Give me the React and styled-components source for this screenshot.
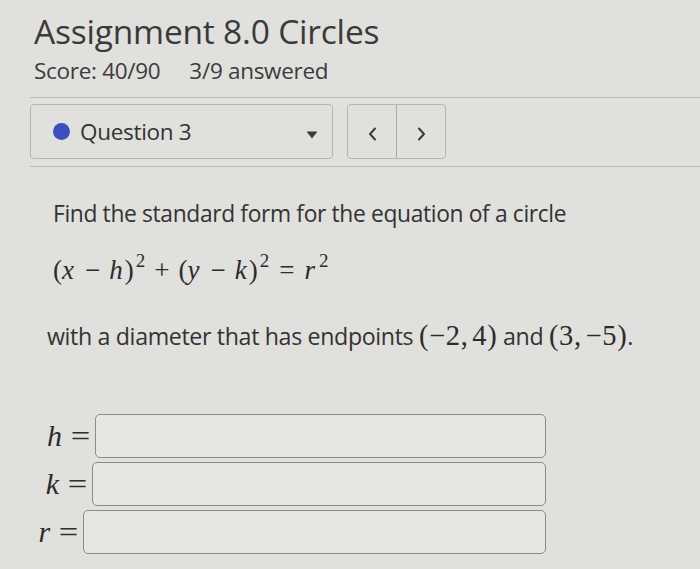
import React from "react";
import styled, { createGlobalStyle } from "styled-components";

const Global = createGlobalStyle`
  html, body { margin: 0; padding: 0; background: #e0e0dd; }
  body { font-family: "Open Sans", "Liberation Sans", sans-serif; color: #333; }
`;

const Page = styled.div`
  width: 700px;
  height: 569px;
  overflow: hidden;
  background: #e0e0dd;
`;

const Header = styled.header`
  padding: 10px 0 0 34px;
`;

const Title = styled.h1`
  margin: 0;
  font-size: 33.5px;
  font-weight: 400;
  line-height: 42px;
  color: #3a3a3a;
  letter-spacing: -0.2px;
`;

const ScoreRow = styled.div`
  display: flex;
  gap: 29px;
  font-size: 22.5px;
  line-height: 30px;
  color: #3c3c3c;
  margin-top: 4px;
  letter-spacing: -0.3px;
`;

const Bar = styled.div`
  margin: 11px 0 0 30px;
  border-top: 1.5px solid #b8b8b4;
  border-bottom: 1.5px solid #b8b8b4;
  padding: 6px 0 7px 0;
  display: flex;
  align-items: center;
  gap: 14px;
`;

const Select = styled.div`
  width: 303px;
  height: 55px;
  box-sizing: border-box;
  border: 1.5px solid #b4b4b0;
  border-radius: 4px;
  display: flex;
  align-items: center;
  padding: 0 12px 0 22px;
  font-size: 22.5px;
  color: #333;
  letter-spacing: -0.3px;
`;

const Dot = styled.span`
  width: 17px;
  height: 17px;
  border-radius: 50%;
  background: #3b4fc1;
  margin-right: 10px;
  flex: none;
`;

const Label = styled.span`
  flex: 1;
`;

const Caret = styled.svg`
  width: 12px;
  height: 8px;
  margin-top: 6px;
  margin-right: 2px;
  fill: #3c3c3c;
`;

const NavGroup = styled.div`
  display: flex;
  height: 55px;
  box-sizing: border-box;
  border: 1.5px solid #b4b4b0;
  border-radius: 4px;
`;

const NavButton = styled.div`
  width: 48px;
  display: flex;
  align-items: center;
  justify-content: center;
  & + & { border-left: 1.5px solid #a8a8a4; }
  svg {
    width: 11px;
    height: 14px;
    fill: none;
    stroke: #3a3a3a;
    stroke-width: 2;
    stroke-linecap: round;
    stroke-linejoin: round;
    margin-top: 4px;
  }
`;

const Body = styled.main`
  padding: 31px 0 0 53px;
`;

const Prompt = styled.p`
  margin: 0;
  font-size: 22.8px;
  line-height: 32px;
  color: #333;
  letter-spacing: -0.35px;
  white-space: nowrap;
`;

const MathLine = styled.div`
  margin-top: 24px;
  font-family: "Liberation Serif", "DejaVu Serif", serif;
  font-size: 27px;
  line-height: 32px;
  color: #2c2c2c;
  white-space: nowrap;
`;

const V = styled.i`
  font-style: italic;
  padding-right: 2px;
`;

const Sup = styled.sup`
  font-size: 19px;
  font-style: normal;
  vertical-align: 0;
  position: relative;
  top: -12px;
  margin-left: 2px;
`;

const Op = styled.span`
  padding: 0 ${(p) => p.$pad ?? 9}px;
`;

const Inline = styled.span`
  font-family: "Liberation Serif", "DejaVu Serif", serif;
  font-size: 28.5px;
  color: #2c2c2c;
  letter-spacing: 0.6px;
`;

const Gap = styled.span`
  display: inline-block;
  width: ${(p) => p.$w}px;
`;

const Endpoints = styled(Prompt)`
  margin-top: 31px;
  margin-left: -6px;
  font-size: 23.2px;
`;

const Answers = styled.div`
  margin-top: 62px;
  display: grid;
  grid-template-columns: 60px 451px;
  row-gap: 4px;
  padding-left: 35px;
`;

const VarLabel = styled.div`
  font-family: "Liberation Serif", "DejaVu Serif", serif;
  font-size: 30px;
  color: #2c2c2c;
  display: flex;
  align-items: center;
  justify-content: flex-end;
  padding-right: 6px;
  gap: 8px;
  margin-left: ${(p) => p.$shift || 0}px;
  margin-right: ${(p) => -(p.$shift || 0)}px;
`;

const Eq = styled.span`
  font-style: normal;
  font-size: 30px;
  display: inline-block;
  transform: scaleX(1.15);
`;

const Input = styled.input`
  height: 44px;
  box-sizing: border-box;
  border: 1.5px solid #8c8c88;
  border-radius: 5px;
  background: #e5e5e2;
  outline: none;
  margin-left: ${(p) => p.$shift || 0}px;
`;

export default function App() {
  const rows = [
    { v: "h", shift: 0 },
    { v: "k", shift: -3 },
    { v: "r", shift: -12 },
  ];
  return (
    <Page>
      <Global />
      <Header>
        <Title>Assignment 8.0 Circles</Title>
        <ScoreRow>
          <span>Score: 40/90</span>
          <span>3/9 answered</span>
        </ScoreRow>
      </Header>
      <Bar>
        <Select>
          <Dot />
          <Label>Question 3</Label>
          <Caret viewBox="0 0 12 8">
            <path d="M0.5 0.5 H11.5 L6 7.5 Z" />
          </Caret>
        </Select>
        <NavGroup>
          <NavButton>
            <svg viewBox="0 0 11 14">
              <polyline points="8,1.5 3,7 8,12.5" />
            </svg>
          </NavButton>
          <NavButton>
            <svg viewBox="0 0 11 14">
              <polyline points="3,1.5 8,7 3,12.5" />
            </svg>
          </NavButton>
        </NavGroup>
      </Bar>
      <Body>
        <Prompt>Find the standard form for the equation of a circle</Prompt>
        <MathLine>
          (<V>x</V>
          <Op>−</Op>
          <V>h</V>)<Sup>2</Sup>
          <Op>+</Op>(<V>y</V>
          <Op>−</Op>
          <V>k</V>)<Sup>2</Sup>
          <Op $pad={10}>=</Op>
          <V>r</V>
          <Sup>2</Sup>
        </MathLine>
        <Endpoints>
          with a diameter that has endpoints{" "}
          <Inline>
            (−2,<Gap $w={4} />4)
          </Inline>{" "}
          and{" "}
          <Inline>
            (3,<Gap $w={4} />−5)
          </Inline>
          .
        </Endpoints>
      </Body>
      <Answers>
        {rows.map((r) => (
          <React.Fragment key={r.v}>
            <VarLabel $shift={r.shift}>
              <V>{r.v}</V>
              <Eq>=</Eq>
            </VarLabel>
            <Input $shift={r.shift} aria-label={r.v} />
          </React.Fragment>
        ))}
      </Answers>
    </Page>
  );
}
